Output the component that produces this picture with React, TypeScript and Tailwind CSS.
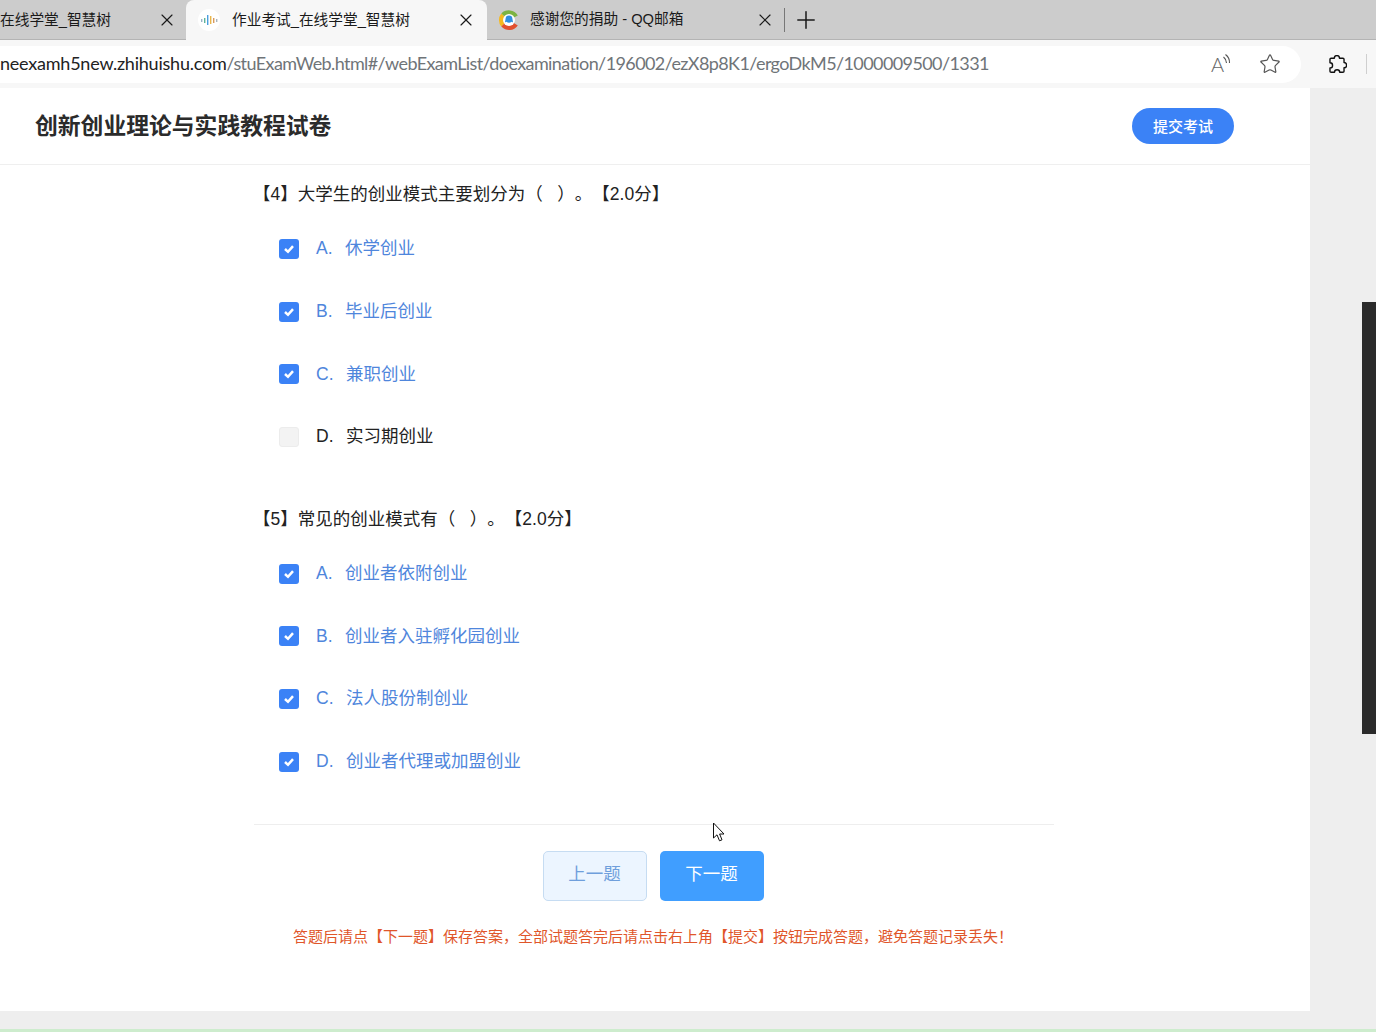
import { X, Plus, Star } from 'lucide-react';

const cjk = '"Liberation Sans", "Noto Sans CJK SC", sans-serif';

type Option = { key: string; text: string; checked: boolean };

const questions: { title: string; options: Option[] }[] = [
  {
    title: '【4】大学生的创业模式主要划分为（   ）。【2.0分】',
    options: [
      { key: 'A.', text: '休学创业', checked: true },
      { key: 'B.', text: '毕业后创业', checked: true },
      { key: 'C.', text: '兼职创业', checked: true },
      { key: 'D.', text: '实习期创业', checked: false },
    ],
  },
  {
    title: '【5】常见的创业模式有（   ）。【2.0分】',
    options: [
      { key: 'A.', text: '创业者依附创业', checked: true },
      { key: 'B.', text: '创业者入驻孵化园创业', checked: true },
      { key: 'C.', text: '法人股份制创业', checked: true },
      { key: 'D.', text: '创业者代理或加盟创业', checked: true },
    ],
  },
];

function BarsFavicon() {
  return (
    <div className="w-[22px] h-[22px] rounded-full bg-white flex items-center justify-center">
      <svg width="18" height="12" viewBox="0 0 18 12">
        <rect x="1" y="5" width="1.4" height="3" fill="#9ab5c9" />
        <rect x="4" y="4" width="1.4" height="5" fill="#5fb59a" />
        <rect x="7" y="1" width="1.4" height="10" fill="#4a9fe0" />
        <rect x="10" y="2" width="1.4" height="8" fill="#e8b64c" />
        <rect x="13" y="4" width="1.4" height="5" fill="#d99a5c" />
        <rect x="16" y="5" width="1.4" height="3" fill="#a8b4bc" />
      </svg>
    </div>
  );
}

function MailFavicon() {
  return (
    <svg width="22" height="22" viewBox="1 1 20 20">
      <path d="M4 5 A9.5 9.5 0 0 1 19 7 L15 9 A5 5 0 0 0 7 8 Z" fill="#7cb342" />
      <path d="M4 5 A9.5 9.5 0 0 0 4 17 L7 14 A5 5 0 0 1 7 8 Z" fill="#f5b91f" />
      <path d="M4 17 A9.5 9.5 0 0 0 19 16 L15 13.5 A5 5 0 0 1 7 14 Z" fill="#e2502e" />
      <circle cx="11" cy="11" r="5.4" fill="#fff" />
      <path d="M11 6.8 a3.1 3.1 0 0 1 3.1 3.1 l0.6 3.4 l-1.3 -0.6 a4 4 0 0 1 -4.8 0 l-1.3 0.6 l0.6 -3.4 a3.1 3.1 0 0 1 3.1 -3.1 Z" fill="#2f8fe0" />
    </svg>
  );
}

function ReadAloudIcon() {
  return (
    <div className="relative w-[22px] h-[22px]">
      <span className="absolute left-[1px] top-0 text-[20px] leading-[22px] font-light text-[#666]" style={{ fontFamily: 'Lato, sans-serif' }}>
        A
      </span>
      <svg className="absolute left-0 top-0" width="22" height="22" viewBox="0 0 22 22" fill="none" stroke="#555" strokeWidth="1.1">
        <path d="M13.5 4 a8 8 0 0 1 3 6" />
        <path d="M15.5 1.5 a10 10 0 0 1 4 8.5" />
      </svg>
    </div>
  );
}

function ExtensionIcon() {
  return (
    <svg className="mt-[2px]" width="20" height="20" viewBox="1 0.5 18 18.5" fill="none" stroke="#111" strokeWidth="1.3" strokeLinejoin="round">
      <path d="M7.5 3.5 a2.4 2.4 0 0 1 4.8 0 h3.2 a1 1 0 0 1 1 1 v3 a2.4 2.4 0 0 1 0 4.8 v3.2 a1 1 0 0 1 -1 1 h-3 a2.4 2.4 0 0 0 -4.8 0 h-3.2 a1 1 0 0 1 -1 -1 v-3 a2.4 2.4 0 0 0 0 -4.8 v-3.2 a1 1 0 0 1 1 -1 Z" />
    </svg>
  );
}

function Checkbox({ checked }: { checked: boolean }) {
  if (!checked) {
    return <div className="w-5 h-5 mt-px rounded-[3px] bg-[#f3f3f3] border border-[#ececec]" />;
  }
  return (
    <div className="w-5 h-5 mt-px rounded-[3px] bg-[#3b82f6] flex items-center justify-center">
      <svg width="12" height="10" viewBox="0 0 12 10" fill="none" stroke="#fff" strokeWidth="2.5">
        <path d="M2 5 L5 7.8 L10 2.2" />
      </svg>
    </div>
  );
}

function OptionRow({ option }: { option: Option }) {
  const color = option.checked ? 'text-[#4f86dc]' : 'text-[#222]';
  return (
    <div className="h-[62.7px] flex items-center pl-[25px]">
      <Checkbox checked={option.checked} />
      <span className={`ml-[17px] text-[17.5px] ${color}`}>{option.key}</span>
      <span className={`ml-[12.5px] text-[17.5px] ${color}`}>{option.text}</span>
    </div>
  );
}

export default function App() {
  return (
    <div className="relative w-[1376px] h-[1032px] overflow-hidden flex flex-col bg-[#eeeeee]" style={{ fontFamily: cjk }}>
      {/* Tab strip */}
      <div className="h-10 shrink-0 flex bg-[#cccccc] border-b border-[#b4b4b4] text-[14.7px] text-[#1a1a1a]">
        <div className="w-[186px] flex items-center justify-between pr-[9px] mb-[-1px]">
          <span>在线学堂_智慧树</span>
          <X size={20} strokeWidth={1.4} />
        </div>
        <div className="w-[301px] h-10 bg-[#f7f7f7] rounded-t-[8px] flex items-center pl-3 pr-[11px]">
          <BarsFavicon />
          <span className="ml-3 flex-1">作业考试_在线学堂_智慧树</span>
          <X size={20} strokeWidth={1.4} />
        </div>
        <div className="w-[297px] flex items-center pl-[11px] pr-[9px]">
          <MailFavicon />
          <span className="ml-[10px] flex-1">感谢您的捐助 - QQ邮箱</span>
          <X size={20} strokeWidth={1.4} />
        </div>
        <div className="w-px h-[24px] mt-2 bg-[#777]" />
        <div className="ml-[7px] flex items-center">
          <Plus size={28} strokeWidth={1.3} />
        </div>
      </div>

      {/* Address bar */}
      <div className="h-[48px] shrink-0 bg-[#f7f7f7] flex items-center">
        <div className="w-[1301px] h-[37px] bg-white rounded-r-full flex items-center justify-between pr-[20px]">
          <div className="text-[18px] whitespace-nowrap pb-[2px]" style={{ fontFamily: 'Lato, sans-serif' }}>
            <span className="text-[#222] tracking-[-0.22px]">neexamh5new.zhihuishu.com</span>
            <span className="text-[#6f7478] tracking-[-0.6px]">/stuExamWeb.html#/webExamList/doexamination/196002/ezX8p8K1/ergoDkM5/1000009500/1331</span>
          </div>
          <div className="flex items-center gap-[27px]">
            <ReadAloudIcon />
            <Star size={22} strokeWidth={1.3} color="#555" />
          </div>
        </div>
        <div className="ml-[26px]">
          <ExtensionIcon />
        </div>
        <div className="ml-[19px] w-px h-[20px] bg-[#cfcfcf]" />
      </div>

      {/* Page */}
      <div className="w-[1310px] h-[923px] shrink-0 bg-white flex flex-col">
        <header className="h-[77px] shrink-0 border-b border-[#efefef] flex items-center justify-between pl-[35px] pr-[76px]">
          <h1 className="text-[22.8px] font-bold text-[#2b2b2b] pt-[1px]">创新创业理论与实践教程试卷</h1>
          <button className="w-[102px] h-9 rounded-full bg-[#3b82f6] text-white text-[15px] font-medium pt-[2px]">提交考试</button>
        </header>

        <main className="ml-[254px] w-[800px] pt-[11px]">
          {questions.map((q) => (
            <section key={q.title} className="mb-[33px] last-of-type:mb-[31px]">
              <h2 className="h-9 mb-[5px] -ml-px flex items-center text-[17.5px] font-normal text-[#222] whitespace-pre [text-spacing-trim:space-all]">{q.title}</h2>
              {q.options.map((o) => (
                <OptionRow key={o.key} option={o} />
              ))}
            </section>
          ))}
          <div className="border-t border-[#eeeeee] pt-[26px] flex justify-center gap-[13px] pr-[2px]">
            <button className="w-[104px] h-[50px] rounded-[5px] bg-[#ecf5ff] border border-[#c6dcf2] text-[#6f9fdc] text-[17.5px] pb-[3px]">上一题</button>
            <button className="w-[104px] h-[50px] rounded-[5px] bg-[#409eff] text-white text-[17.5px] pb-[3px]">下一题</button>
          </div>
          <p className="mt-[25px] text-center text-[15px] text-[#e0562a] pr-[2px]">
            答题后请点【下一题】保存答案，全部试题答完后请点击右上角【提交】按钮完成答题，避免答题记录丢失！
          </p>
        </main>
      </div>

      <div className="flex-1 bg-[#eeeeee] border-b-[3px] border-[#cdeccd]" />

      {/* Dark bar over the right edge */}
      <div className="absolute left-[1362px] top-[302px] w-[14px] h-[432px] bg-[#2b2b2b]" />

      {/* Mouse cursor */}
      <svg className="absolute left-[712px] top-[822px]" width="14" height="21" viewBox="0 0 14 21" fill="#fff" stroke="#111" strokeWidth="1">
        <path d="M1.5 1 V16 L5 12.8 L7.5 18.8 L10 17.8 L7.6 12 H12 Z" />
      </svg>
    </div>
  );
}
